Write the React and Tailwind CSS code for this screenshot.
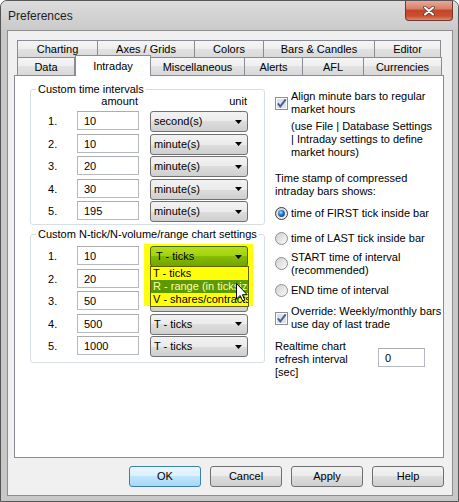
import React from "react";

const topTabs = [
  { label: "Charting", w: "w-[81px] border-l" },
  { label: "Axes / Grids", w: "w-[97px]" },
  { label: "Colors", w: "w-[69px]" },
  { label: "Bars & Candles", w: "w-[111px]" },
  { label: "Editor", w: "w-[66px]" },
];

const bottomTabs = [
  { label: "Data", w: "w-[58px] border-l" },
  { label: "Intraday", w: "w-[76px]", selected: true },
  { label: "Miscellaneous", w: "w-[94px]" },
  { label: "Alerts", w: "w-[58px]" },
  { label: "AFL", w: "w-[61px]" },
  { label: "Currencies", w: "w-[78px]" },
];

const intervals = [
  { n: 1, amount: "10", unit: "second(s)" },
  { n: 2, amount: "10", unit: "minute(s)" },
  { n: 3, amount: "20", unit: "minute(s)" },
  { n: 4, amount: "30", unit: "minute(s)" },
  { n: 5, amount: "195", unit: "minute(s)" },
];

// rows 2 and 3 sit under the open dropdown
const tickRows = [
  { n: 2, amount: "20", covered: true },
  { n: 3, amount: "50", covered: true },
  { n: 4, amount: "500" },
  { n: 5, amount: "1000" },
];

const tabBg =
  "bg-[linear-gradient(to_bottom,#f5f5f5_0%,#eeeeee_50%,#e2e2e2_50%,#d9d9d9_100%)]";
const btnBg =
  "bg-[linear-gradient(to_bottom,#f2f2f2_0%,#ebebeb_50%,#dddddd_50%,#cfcfcf_100%)]";

function Arrow() {
  return (
    <svg width="7" height="4" viewBox="0 0 7 4" className="shrink-0">
      <path d="M0 0H7L3.5 4Z" fill="#000" />
    </svg>
  );
}

function TextBox({ value, w = "w-[62px]", extra = "" }) {
  return (
    <div
      className={`${w} ${extra} h-[19px] shrink-0 border border-[#b5b8bf] border-t-[#abadb3] bg-white pl-[6px] leading-[19px]`}
    >
      {value}
    </div>
  );
}

function Combo({ value, covered }) {
  return (
    <div
      className={`flex h-[21px] w-[98px] items-center justify-between rounded-[3px] border border-[#707070] ${btnBg} pl-[3px] pr-[5px]`}
    >
      {covered ? null : <span>{value}</span>}
      {covered ? null : <Arrow />}
    </div>
  );
}

function Row({ n, amount, children }) {
  return (
    <div className="flex h-[21px] items-start pl-[17px]">
      <span className="w-[29px] leading-[21px]">{n}.</span>
      <TextBox value={amount} />
      <div className="ml-[11px]">{children}</div>
    </div>
  );
}

function Check() {
  return (
    <svg width="13" height="13" viewBox="0 0 13 13" className="shrink-0">
      <rect x="0.5" y="0.5" width="12" height="12" fill="#fdfdfd" stroke="#8e8f8f" />
      <rect x="2" y="2" width="9" height="9" fill="#dde1e8" />
      <path d="M2.8 6.3L5.3 9.4L10.7 2.3" fill="none" stroke="#4a5f9a" strokeWidth="1.9" />
    </svg>
  );
}

function Radio({ checked }) {
  return (
    <svg width="13" height="13" viewBox="0 0 13 13" className="shrink-0">
      <defs>
        <linearGradient id="radioBg" x1="0" y1="0" x2="1" y2="1">
          <stop offset="0" stopColor="#cfcfcf" />
          <stop offset="1" stopColor="#fbfbfb" />
        </linearGradient>
        <radialGradient id="radioDot" cx="0.4" cy="0.35" r="0.7">
          <stop offset="0" stopColor="#a8ecff" />
          <stop offset="0.45" stopColor="#2b83dc" />
          <stop offset="1" stopColor="#0f3a85" />
        </radialGradient>
      </defs>
      <circle cx="6.5" cy="6.5" r="6" fill="url(#radioBg)" stroke={checked ? "#3c3c3c" : "#8f8f8f"} />
      {checked && <circle cx="6.5" cy="6.5" r="3.4" fill="url(#radioDot)" />}
    </svg>
  );
}

function Cursor() {
  return (
    <svg width="12" height="19" viewBox="0 0 12 19" className="absolute left-[86px] top-[37px]">
      <path d="M0.5 0.5V16L4.2 12.5L6.7 18L8.8 17L6.4 11.7H11.2Z" fill="#fff" stroke="#000" />
    </svg>
  );
}

function Button({ label, focused }) {
  return (
    <div
      className={`flex h-[21px] w-[72px] items-center justify-center rounded-[3px] border ${
        focused
          ? "border-[#3c7fb1] bg-[linear-gradient(to_bottom,#eaf6fd_0%,#d9f0fc_50%,#bee6fd_50%,#a7d9f5_100%)]"
          : `border-[#707070] ${btnBg}`
      }`}
    >
      {label}
    </div>
  );
}

export default function App() {
  return (
    <div className="h-[502px] w-[459px] font-['Liberation_Sans',Arial,sans-serif] text-[11px] leading-[13px] text-black">
      <div className="flex h-full w-full flex-col overflow-hidden rounded-t-[7px] border border-[#555555] bg-[#c8c8c8]">
        {/* title bar */}
        <div className="flex h-[29px] shrink-0 items-start justify-between bg-linear-to-b from-[#dcdcdc] to-[#cacaca]">
          <span className="pl-[7px] pt-[8px] text-[12px] leading-[14px] text-[#1e1e1e]">
            Preferences
          </span>
          <div className="mr-[5px] flex h-[20px] w-[48px] items-center justify-center rounded-b-[4px] border border-t-0 border-[#6e3a30] bg-[linear-gradient(to_bottom,#e9a999_0%,#d7806a_40%,#c4452a_50%,#c9502f_80%,#dc8a6e_100%)]">
            <svg width="12" height="10" viewBox="0 0 12 10">
              <path d="M2 1.5L10 8.5M10 1.5L2 8.5" stroke="#5a3a34" strokeWidth="3.6" strokeLinecap="round" />
              <path d="M2 1.5L10 8.5M10 1.5L2 8.5" stroke="#ffffff" strokeWidth="2" strokeLinecap="round" />
            </svg>
          </div>
        </div>

        {/* client area */}
        <div className="ml-[6px] flex h-[466px] w-[446px] flex-col border border-[#8d8d8d] bg-[#f0f0f0] pt-[9px]">
          <div className="ml-[6px] w-[430px]">
            {/* tabs */}
            <div className="ml-[3px] flex h-[17px]">
              {topTabs.map((t) => (
                <div
                  key={t.label}
                  className={`${t.w} flex items-center justify-center border-r border-t border-[#898c95] ${tabBg}`}
                >
                  {t.label}
                </div>
              ))}
            </div>
            <div className="ml-[3px] flex h-[18px] items-start">
              {bottomTabs.map((t) =>
                t.selected ? (
                  <div
                    key={t.label}
                    className={`${t.w} relative z-10 -mt-[2px] flex h-[21px] items-center justify-center border-x border-t border-[#898c95] bg-white`}
                  >
                    {t.label}
                  </div>
                ) : (
                  <div
                    key={t.label}
                    className={`${t.w} flex h-[18px] items-center justify-center border-r border-t border-[#898c95] pt-[1px] ${tabBg}`}
                  >
                    {t.label}
                  </div>
                )
              )}
            </div>

            {/* tab page */}
            <div className="flex h-[383px] border border-[#898c95] bg-white pl-[15px]">
              <div className="flex w-[235px] flex-col pt-[7px]">
                <fieldset className="rounded-[3px] border border-[#d5dfe5] pb-[2px]">
                  <legend className="ml-[5px] px-[2px]">Custom time intervals</legend>
                  <div className="-mt-[1px] flex pl-[17px]">
                    <span className="w-[29px]" />
                    <span className="w-[62px] pr-[1px] text-right">amount</span>
                    <span className="ml-[11px] w-[98px] pr-[1px] text-right">unit</span>
                  </div>
                  <div className="mt-[3px] flex flex-col gap-[1.5px]">
                    {intervals.map((r) => (
                      <Row key={r.n} n={r.n} amount={r.amount}>
                        <Combo value={r.unit} />
                      </Row>
                    ))}
                  </div>
                </fieldset>

                <fieldset className="mt-[3px] rounded-[3px] border border-[#d5dfe5] pb-[5px]">
                  <legend className="ml-[5px] px-[2px]">
                    Custom N-tick/N-volume/range chart settings
                  </legend>
                  <div className="mt-[5px] flex flex-col gap-[1.5px]">
                    <div className="relative z-10 flex h-[21px] items-start pl-[17px]">
                      <span className="w-[29px] leading-[21px]">1.</span>
                      <TextBox value="10" />
                      <div className="relative ml-[11px]">
                        <div className="absolute left-[-6px] top-[-2px] h-[62px] w-[109px] bg-[#ffff0a]" />
                        <div className="relative flex h-[21px] w-[98px] items-center justify-between rounded-[3px] border border-[#456a00] bg-[linear-gradient(to_bottom,#b4dd1e_0%,#a2d20c_50%,#86bb00_50%,#6fa500_100%)] pl-[5px] pr-[5px]">
                          <span>T - ticks</span>
                          <Arrow />
                        </div>
                        <div className="absolute left-0 top-[20px] h-[41px] w-[99px] overflow-hidden whitespace-nowrap border border-[#5f5f00] bg-[#ffff0a]">
                          <div className="pl-[2px] leading-[13px]">T - ticks</div>
                          <div className="bg-[#5c9a00] pl-[2px] leading-[13px] text-[#ffffa8]">
                            R - range (in ticksize)
                          </div>
                          <div className="pl-[2px] leading-[13px]">V - shares/contracts</div>
                        </div>
                        <Cursor />
                      </div>
                    </div>
                    {tickRows.map((r) => (
                      <Row key={r.n} n={r.n} amount={r.amount}>
                        <Combo value="T - ticks" covered={r.covered} />
                      </Row>
                    ))}
                  </div>
                </fieldset>
              </div>

              {/* right column */}
              <div className="ml-[10px] flex w-[166px] flex-col whitespace-nowrap pt-[14px]">
                <div className="flex items-center gap-[3px]">
                  <Check />
                  <div>
                    Align minute bars to regular
                    <br />
                    market hours
                  </div>
                </div>
                <div className="mt-[3.5px] pl-[16px]">
                  (use File | Database Settings
                  <br />| Intraday settings to define
                  <br />
                  market hours)
                </div>
                <div className="mt-[13px]">
                  Time stamp of compressed
                  <br />
                  intraday bars shows:
                </div>
                <div className="mt-[9px] flex items-center gap-[3px]">
                  <Radio checked />
                  <span>time of FIRST tick inside bar</span>
                </div>
                <div className="mt-[12px] flex items-center gap-[3px]">
                  <Radio />
                  <span>time of LAST tick inside bar</span>
                </div>
                <div className="mt-[6px] flex items-center gap-[3px]">
                  <Radio />
                  <span>
                    START time of interval
                    <br />
                    (recommended)
                  </span>
                </div>
                <div className="mt-[7.5px] flex items-center gap-[3px]">
                  <Radio />
                  <span>END time of interval</span>
                </div>
                <div className="mt-[8px] flex items-center gap-[3px]">
                  <Check />
                  <span>
                    Override: Weekly/monthly bars
                    <br />
                    use day of last trade
                  </span>
                </div>
                <div className="mt-[8.5px] flex items-start">
                  <div className="w-[103px] leading-[13.3px]">
                    Realtime chart
                    <br />
                    refresh interval
                    <br />
                    [sec]
                  </div>
                  <TextBox value="0" w="w-[47px]" extra="mt-[8px]" />
                </div>
              </div>
            </div>

            {/* dialog buttons */}
            <div className="mt-[8px] flex justify-end gap-[9px]">
              <Button label="OK" focused />
              <Button label="Cancel" />
              <Button label="Apply" />
              <Button label="Help" />
            </div>
          </div>
        </div>
      </div>
    </div>
  );
}
